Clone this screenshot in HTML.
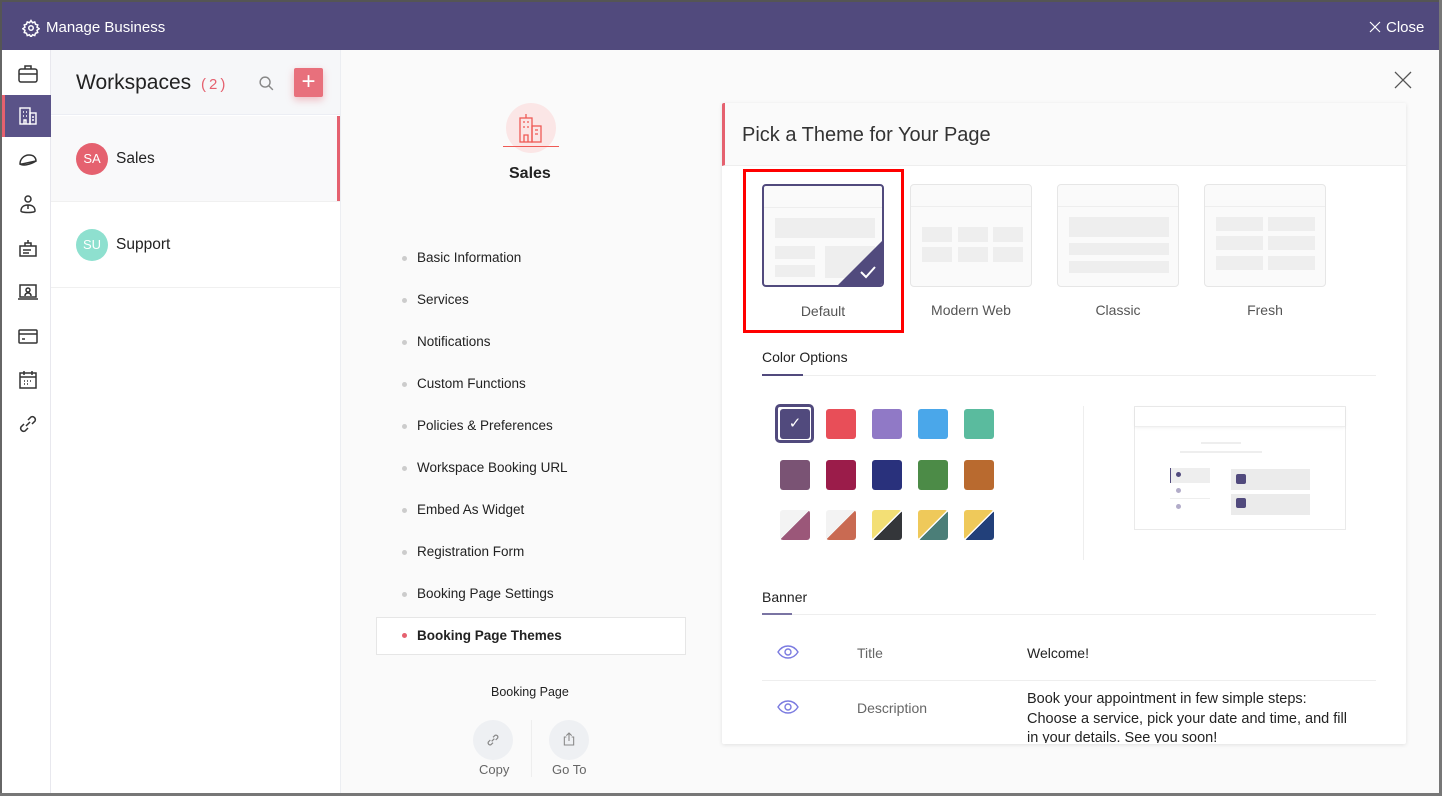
<!DOCTYPE html><html><head><meta charset="utf-8"><style>
*{box-sizing:border-box;margin:0;padding:0}
body{width:1442px;height:796px;position:relative;overflow:hidden;font-family:"Liberation Sans",sans-serif;background:#fafafa;color:#222}
.a{position:absolute}
.hd{left:0;top:0;width:1442px;height:50px;background:#514a7d;color:#fff;border:2px solid #555;border-bottom:none}
.rail{left:0;top:50px;width:51px;height:746px;background:#fff;border-right:1px solid #e8e8ee;border-left:2px solid #666}
.ic{position:absolute;left:14px;width:24px;height:24px}
.nav li{list-style:none;position:absolute;left:417px;font-size:13.5px;color:#222}
.nav li:before{content:"";position:absolute;left:-15px;top:6px;width:5px;height:5px;border-radius:50%;background:#ccc}
.th{position:absolute;top:184px;width:122px;height:103px;border:1px solid #e6e6e6;border-radius:4px;background:#fafafa;overflow:hidden}
.th .t{height:22px;border-bottom:1px solid #eee}
.b{position:absolute;background:#eeeeee}
.lbl{position:absolute;top:302px;width:122px;text-align:center;font-size:14px;color:#555}
.sw{position:absolute;width:30px;height:30px;border-radius:3px}
</style></head><body>
<div class="a hd">
<svg class="a" style="left:20px;top:17px" width="18" height="18" viewBox="0 0 24 24" fill="none" stroke="#fff" stroke-width="2"><circle cx="12" cy="12" r="3"/><path d="M12 2l2 3 3-1 1 3 3 1-1 3 3 2-3 2 1 3-3 1-1 3-3-1-2 3-2-3-3 1-1-3-3-1 1-3-3-2 3-2-1-3 3-1 1-3 3 1z"/></svg>
<div class="a" style="left:44px;top:17px;font-size:15px">Manage Business</div>
<svg class="a" style="left:1367px;top:19px" width="12" height="12" viewBox="0 0 12 12" stroke="#fff" stroke-width="1.2"><path d="M1 1l10 10M11 1L1 11"/></svg>
<div class="a" style="left:1384px;top:17px;font-size:15px">Close</div>
</div>
<div class="a rail">
<svg class="ic" style="top:12px" viewBox="0 0 24 24" fill="none" stroke="#333" stroke-width="1.5"><rect x="3" y="7" width="18" height="13" rx="2"/><path d="M9 7V4h6v3M3 12h18"/></svg>
<div class="a" style="left:0;top:45px;width:49px;height:42px;background:#5a5388;border-left:3px solid #e5616f"></div>
<svg class="ic" style="top:54px" viewBox="0 0 24 24" fill="none" stroke="#fff" stroke-width="1.4"><rect x="4" y="4" width="10" height="16"/><rect x="14" y="9" width="6" height="11"/><path d="M7 8h1M10 8h1M7 12h1M10 12h1M8 20v-4h2v4M16 13h2M16 16h2"/></svg>
<svg class="ic" style="top:98px" viewBox="0 0 24 24" fill="none" stroke="#333" stroke-width="1.5"><path d="M4 16c0-5 4-9 9-9s7 3 7 6l-14 3zM4 16c2 2 10 1 16-3"/></svg>
<svg class="ic" style="top:142px" viewBox="0 0 24 24" fill="none" stroke="#333" stroke-width="1.5"><circle cx="12" cy="7" r="3"/><path d="M5 19c0-4 3-6 7-6s7 2 7 6c0 2-14 2-14 0zM12 13v4"/></svg>
<svg class="ic" style="top:186px" viewBox="0 0 24 24" fill="none" stroke="#333" stroke-width="1.5"><rect x="4" y="10" width="16" height="10"/><path d="M9 10V7h6v3M12 7V4M7 14h8M7 17h6"/></svg>
<svg class="ic" style="top:230px" viewBox="0 0 24 24" fill="none" stroke="#333" stroke-width="1.5"><rect x="4" y="5" width="16" height="12"/><path d="M2 19h20M9 16c0-2 1-3 3-3s3 1 3 3"/><circle cx="12" cy="10" r="2"/></svg>
<svg class="ic" style="top:274px" viewBox="0 0 24 24" fill="none" stroke="#333" stroke-width="1.5"><rect x="3" y="6" width="18" height="13" rx="1"/><path d="M3 10h18M6 15h3"/></svg>
<svg class="ic" style="top:318px" viewBox="0 0 24 24" fill="none" stroke="#333" stroke-width="1.5"><rect x="4" y="5" width="16" height="15"/><path d="M4 9h16M8 3v4M16 3v4M8 13h1M11 13h1M14 13h1M8 16h1M11 16h1"/></svg>
<svg class="ic" style="top:362px" viewBox="0 0 24 24" fill="none" stroke="#333" stroke-width="1.5"><path d="M10 14l4-4M8 12l-3 3a3 3 0 004 4l3-3M16 12l3-3a3 3 0 00-4-4l-3 3"/></svg>
</div>
<div class="a" style="left:51px;top:50px;width:290px;height:746px;background:#fff;border-right:1px solid #eceef2"></div>
<div class="a" style="left:51px;top:50px;width:289px;height:65px;background:#f6f7f9;border-bottom:1px solid #eceef4"></div>
<div class="a" style="left:76px;top:71px;font-size:21px;color:#222">Workspaces <span style="color:#e5616f;font-size:15px;letter-spacing:3px;margin-left:4px">(2)</span></div>
<svg class="a" style="left:258px;top:75px" width="17" height="17" viewBox="0 0 24 24" fill="none" stroke="#888" stroke-width="2"><circle cx="10" cy="10" r="7"/><path d="M15 15l6 6"/></svg>
<div class="a" style="left:294px;top:68px;width:29px;height:29px;background:#e8707c;border-radius:2px;box-shadow:0 3px 8px rgba(229,97,111,.4);color:#fff;font-size:24px;text-align:center;line-height:28px">+</div>
<div class="a" style="left:51px;top:116px;width:289px;height:86px;background:#f9f9fa;border-bottom:1px solid #f0f0f0"></div>
<div class="a" style="left:337px;top:116px;width:3px;height:85px;background:#e5616f"></div>
<div class="a" style="left:76px;top:143px;width:32px;height:32px;border-radius:50%;background:#e5616f;color:#fff;font-size:13px;text-align:center;line-height:32px">SA</div>
<div class="a" style="left:116px;top:150px;font-size:15.5px">Sales</div>
<div class="a" style="left:51px;top:287px;width:289px;height:1px;background:#f0f0f0"></div>
<div class="a" style="left:76px;top:229px;width:32px;height:32px;border-radius:50%;background:#8ee0cf;color:#fff;font-size:13px;text-align:center;line-height:32px">SU</div>
<div class="a" style="left:116px;top:236px;font-size:15.5px">Support</div>

<div class="a" style="left:506px;top:103px;width:50px;height:50px;border-radius:50%;background:#fbe6e6"></div>
<svg class="a" style="left:516px;top:110px" width="30" height="36" viewBox="0 0 30 36" fill="none" stroke="#ef5a55" stroke-width="1.3"><rect x="4" y="8" width="12" height="24"/><rect x="16" y="16" width="9" height="16"/><path d="M10 8V4M7 12h2M11 12h2M7 17h2M11 17h2M8 32v-7h4v7M19 20h3M19 24h3"/></svg>
<div class="a" style="left:503px;top:146px;width:56px;height:1px;background:#ef5a55"></div>
<div class="a" style="left:509px;top:165px;font-size:16px;font-weight:bold">Sales</div>
<ul class="nav">
<li style="top:250px">Basic Information</li><li style="top:292px">Services</li><li style="top:334px">Notifications</li><li style="top:376px">Custom Functions</li><li style="top:418px">Policies &amp; Preferences</li><li style="top:460px">Workspace Booking URL</li><li style="top:502px">Embed As Widget</li><li style="top:544px">Registration Form</li><li style="top:586px">Booking Page Settings</li>
</ul>
<div class="a" style="left:376px;top:617px;width:310px;height:38px;background:#fff;border:1px solid #e6e6e6"></div>
<div class="a" style="left:402px;top:633px;width:5px;height:5px;border-radius:50%;background:#e5616f"></div>
<div class="a" style="left:417px;top:628px;font-size:13.5px;font-weight:bold">Booking Page Themes</div>
<div class="a" style="left:491px;top:685px;font-size:12.5px">Booking Page</div>
<div class="a" style="left:473px;top:720px;width:40px;height:40px;border-radius:50%;background:#eef0f3"></div>
<svg class="a" style="left:485px;top:732px" width="16" height="16" viewBox="0 0 24 24" fill="none" stroke="#888" stroke-width="1.8"><path d="M10 14l4-4M8 12l-3 3a3 3 0 004 4l3-3M16 12l3-3a3 3 0 00-4-4l-3 3"/></svg>
<div class="a" style="left:531px;top:720px;width:1px;height:57px;background:#eee"></div>
<div class="a" style="left:549px;top:720px;width:40px;height:40px;border-radius:50%;background:#eef0f3"></div>
<svg class="a" style="left:561px;top:731px" width="16" height="16" viewBox="0 0 24 24" fill="none" stroke="#888" stroke-width="1.6"><path d="M8 9H5v12h14V9h-3M12 15V3M8 7l4-4 4 4"/></svg>
<div class="a" style="left:479px;top:762px;font-size:13px;color:#666">Copy</div>
<div class="a" style="left:552px;top:762px;font-size:13px;color:#666">Go To</div>

<svg class="a" style="left:1394px;top:71px" width="18" height="18" viewBox="0 0 18 18" stroke="#555" stroke-width="1.3"><path d="M1 1l16 16M17 1L1 17"/></svg>
<div class="a" style="left:722px;top:103px;width:684px;height:641px;background:#fff;box-shadow:0 1px 4px rgba(0,0,0,.1);border-radius:2px;overflow:hidden">
<div class="a" style="left:0;top:0;width:684px;height:63px;background:#fafafa;border-left:3px solid #e5616f;border-bottom:1px solid #eee"></div>
<div class="a" style="left:20px;top:21px;font-size:20px;color:#333">Pick a Theme for Your Page</div>
</div>
<div class="a" style="left:743px;top:169px;width:161px;height:164px;border:3px solid #f00"></div>
<div class="th" style="left:762px;border:2px solid #514a7d"><div class="t"></div><div class="b" style="left:11px;top:32px;width:100px;height:20px"></div><div class="b" style="left:11px;top:60px;width:40px;height:13px"></div><div class="b" style="left:11px;top:79px;width:40px;height:12px"></div><div class="b" style="left:61px;top:60px;width:50px;height:32px"></div>
<svg class="a" style="right:0;bottom:0" width="44" height="44"><path d="M44 0V44H0z" fill="#514a7d"/><path d="M23 31l5 5 9-10" stroke="#fff" stroke-width="2" fill="none"/></svg></div>
<div class="th" style="left:910px"><div class="t"></div>
<div class="b" style="left:11px;top:42px;width:30px;height:15px"></div><div class="b" style="left:47px;top:42px;width:30px;height:15px"></div><div class="b" style="left:82px;top:42px;width:30px;height:15px"></div>
<div class="b" style="left:11px;top:62px;width:30px;height:15px"></div><div class="b" style="left:47px;top:62px;width:30px;height:15px"></div><div class="b" style="left:82px;top:62px;width:30px;height:15px"></div></div>
<div class="th" style="left:1057px"><div class="t"></div><div class="b" style="left:11px;top:32px;width:100px;height:20px"></div><div class="b" style="left:11px;top:58px;width:100px;height:12px"></div><div class="b" style="left:11px;top:76px;width:100px;height:12px"></div></div>
<div class="th" style="left:1204px"><div class="t"></div>
<div class="b" style="left:11px;top:32px;width:47px;height:14px"></div><div class="b" style="left:63px;top:32px;width:47px;height:14px"></div>
<div class="b" style="left:11px;top:51px;width:47px;height:14px"></div><div class="b" style="left:63px;top:51px;width:47px;height:14px"></div>
<div class="b" style="left:11px;top:71px;width:47px;height:14px"></div><div class="b" style="left:63px;top:71px;width:47px;height:14px"></div></div>
<div class="lbl" style="left:762px;top:303px">Default</div><div class="lbl" style="left:910px">Modern Web</div><div class="lbl" style="left:1057px">Classic</div><div class="lbl" style="left:1204px">Fresh</div>
<div class="a" style="left:762px;top:349px;font-size:14px;color:#222">Color Options</div>
<div class="a" style="left:762px;top:375px;width:614px;height:1px;background:#eee"></div>
<div class="a" style="left:762px;top:374px;width:41px;height:2px;background:#514a7d"></div>
<div class="a" style="left:775px;top:404px;width:39px;height:39px;border:3px solid #514a7d;border-radius:5px"></div>
<div class="sw" style="left:780px;top:409px;background:#514a7d;color:#fff;text-align:center;line-height:30px;font-size:15px">✓</div>
<div class="sw" style="left:826px;top:409px;background:#e84e58"></div><div class="sw" style="left:872px;top:409px;background:#9079c6"></div><div class="sw" style="left:918px;top:409px;background:#4aa7ea"></div><div class="sw" style="left:964px;top:409px;background:#5abb9e"></div>
<div class="sw" style="left:780px;top:460px;background:#7a5374"></div><div class="sw" style="left:826px;top:460px;background:#9b1c4a"></div><div class="sw" style="left:872px;top:460px;background:#29317c"></div><div class="sw" style="left:918px;top:460px;background:#4c8b47"></div><div class="sw" style="left:964px;top:460px;background:#b96a2f"></div>
<div class="sw" style="left:780px;top:510px;background:linear-gradient(135deg,#f3f3f3 50%,#9b5779 50%)"></div><div class="sw" style="left:826px;top:510px;background:linear-gradient(135deg,#f3f3f3 50%,#c96a52 50%)"></div><div class="sw" style="left:872px;top:510px;background:linear-gradient(135deg,#f3df75 49%,#fff 49%,#fff 52%,#34363a 52%)"></div><div class="sw" style="left:918px;top:510px;background:linear-gradient(135deg,#efc95a 49%,#fff 49%,#fff 52%,#4b7e78 52%)"></div><div class="sw" style="left:964px;top:510px;background:linear-gradient(135deg,#efc95a 49%,#fff 49%,#fff 52%,#22407a 52%)"></div>
<div class="a" style="left:1083px;top:406px;width:1px;height:154px;background:#eee"></div>
<div class="a" style="left:1134px;top:406px;width:212px;height:124px;border:1px solid #eaeaea;background:#fff">
<div class="a" style="left:0;top:0;width:210px;height:20px;border-bottom:1px solid #eee;box-shadow:0 1px 3px rgba(0,0,0,.06)"></div>
<div class="a" style="left:66px;top:35px;width:40px;height:2px;background:#eee"></div>
<div class="a" style="left:45px;top:44px;width:82px;height:2px;background:#eee"></div>
<div class="a" style="left:35px;top:61px;width:40px;height:15px;background:#eee;border-left:1px solid #514a7d"></div>
<div class="a" style="left:41px;top:65px;width:5px;height:5px;border-radius:50%;background:#514a7d"></div>
<div class="a" style="left:41px;top:81px;width:5px;height:5px;border-radius:50%;background:#b2acc9"></div>
<div class="a" style="left:35px;top:91px;width:40px;height:1px;background:#eee"></div>
<div class="a" style="left:41px;top:97px;width:5px;height:5px;border-radius:50%;background:#b2acc9"></div>
<div class="a" style="left:96px;top:62px;width:79px;height:21px;background:#ebebeb"></div><div class="a" style="left:101px;top:67px;width:10px;height:10px;border-radius:2px;background:#514a7d"></div>
<div class="a" style="left:96px;top:87px;width:79px;height:21px;background:#ebebeb"></div><div class="a" style="left:101px;top:91px;width:10px;height:10px;border-radius:2px;background:#514a7d"></div>
</div>
<div class="a" style="left:762px;top:589px;font-size:14px">Banner</div>
<div class="a" style="left:762px;top:614px;width:614px;height:1px;background:#eee"></div>
<div class="a" style="left:762px;top:613px;width:30px;height:2px;background:#7a74a3"></div>
<svg class="a" style="left:777px;top:645px" width="22" height="14" viewBox="0 0 22 14" fill="none" stroke="#7b7be0" stroke-width="1.4"><path d="M1 7c5-8 15-8 20 0-5 8-15 8-20 0z"/><circle cx="11" cy="7" r="3"/></svg>
<div class="a" style="left:857px;top:645px;font-size:14px;color:#666">Title</div>
<div class="a" style="left:1027px;top:645px;font-size:14px">Welcome!</div>
<div class="a" style="left:762px;top:680px;width:614px;height:1px;background:#eee"></div>
<svg class="a" style="left:777px;top:700px" width="22" height="14" viewBox="0 0 22 14" fill="none" stroke="#7b7be0" stroke-width="1.4"><path d="M1 7c5-8 15-8 20 0-5 8-15 8-20 0z"/><circle cx="11" cy="7" r="3"/></svg>
<div class="a" style="left:857px;top:700px;font-size:14px;color:#666">Description</div>
<div class="a" style="left:1027px;top:690px;width:330px;height:53px;overflow:hidden;font-size:14.5px;line-height:19.5px">Book your appointment in few simple steps: Choose a service, pick your date and time, and fill in your details. See you soon!</div>
<div class="a" style="left:0;top:793px;width:1442px;height:3px;background:#777"></div>
<div class="a" style="left:1439px;top:0;width:3px;height:796px;background:#777"></div>
</body></html>
